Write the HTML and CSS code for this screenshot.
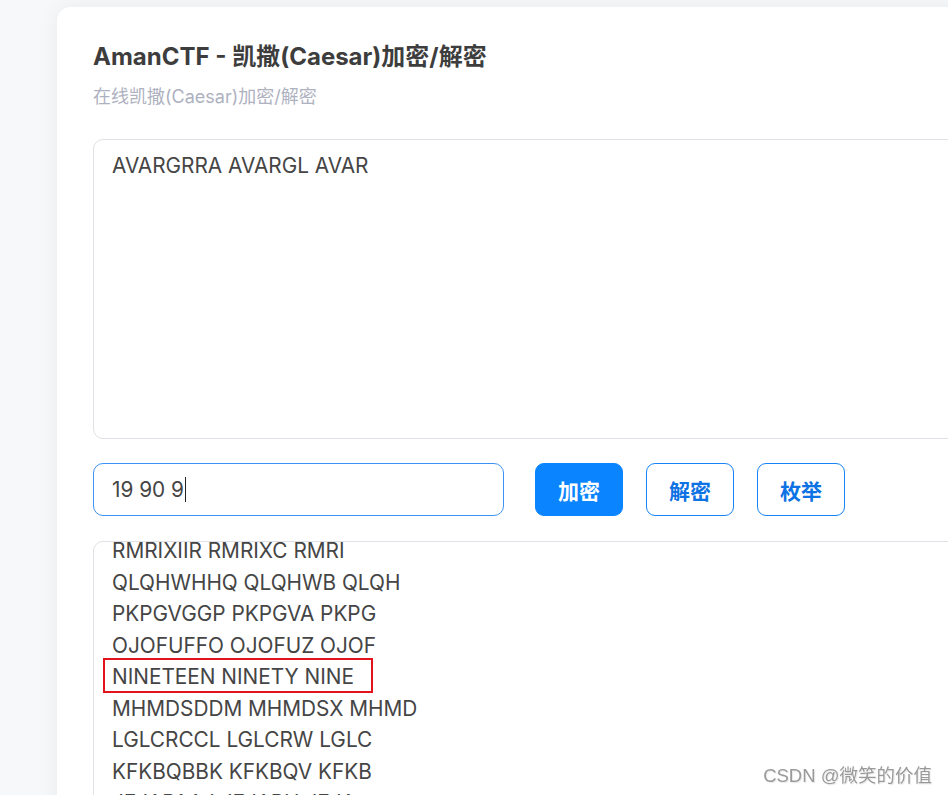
FILE: index.html
```html
<!DOCTYPE html>
<html lang="zh-CN">
<head>
<meta charset="utf-8">
<title>AmanCTF - 凯撒(Caesar)加密/解密</title>
<link rel="stylesheet" href="styles.css">
</head>
<body>
<main class="card">
  <h1 class="title">AmanCTF - 凯撒(Caesar)加密/解密</h1>
  <p class="subtitle">在线凯撒(Caesar)加密/解密</p>
  <div class="textbox">AVARGRRA AVARGL AVAR</div>
  <div class="controls">
    <div class="keyinput">19 90 9<span class="caret"></span></div>
    <button class="btn btn-primary">加密</button>
    <button class="btn">解密</button>
    <button class="btn">枚举</button>
  </div>
  <div class="output">
    <div class="lines">
      <div class="line">ZUZQFQQZ ZUZQFK ZUZQ</div>
      <div class="line">YTYPEPPY YTYPEJ YTYP</div>
      <div class="line">XSXODOOX XSXODI XSXO</div>
      <div class="line">WRWNCNNW WRWNCH WRWN</div>
      <div class="line">VQVMBMMV VQVMBG VQVM</div>
      <div class="line">UPULALLU UPULAF UPUL</div>
      <div class="line">TOTKZKKT TOTKZE TOTK</div>
      <div class="line">SNSJYJJS SNSJYD SNSJ</div>
      <div class="line">RMRIXIIR RMRIXC RMRI</div>
      <div class="line">QLQHWHHQ QLQHWB QLQH</div>
      <div class="line">PKPGVGGP PKPGVA PKPG</div>
      <div class="line">OJOFUFFO OJOFUZ OJOF</div>
      <div class="line hl">NINETEEN NINETY NINE</div>
      <div class="line">MHMDSDDM MHMDSX MHMD</div>
      <div class="line">LGLCRCCL LGLCRW LGLC</div>
      <div class="line">KFKBQBBK KFKBQV KFKB</div>
      <div class="line">JEJAPAAJ JEJAPU JEJA</div>
      <div class="line">IDIZOZZI IDIZOT IDIZ</div>
    </div>
  </div>
</main>
<div class="watermark">CSDN @微笑的价值</div>
</body>
</html>
```

FILE: styles.css
```css
html, body {
  margin: 0;
  padding: 0;
  height: 100%;
  overflow: hidden;
  background: #f7f8fa;
  font-family: Inter, "Noto Sans CJK SC", sans-serif;
  color: #454545;
}

.card {
  box-sizing: border-box;
  width: 1000px;
  height: 900px;
  margin: 7px 0 0 57px;
  padding: 33px 36px 0;
  background: #ffffff;
  border-radius: 14px;
  box-shadow: 0 0 22px rgba(0, 0, 0, 0.06);
}

.title {
  margin: 0;
  font-size: 24px;
  line-height: 33px;
  font-weight: 700;
  color: #3d3d3d;
}

.subtitle {
  margin: 12px 0 0;
  font-size: 18px;
  line-height: 24px;
  color: #aeb1c0;
}

.textbox {
  box-sizing: border-box;
  width: 900px;
  height: 300px;
  margin-top: 30px;
  padding: 10px 18px;
  border: 1px solid #dfe1e6;
  border-radius: 10px;
  font-size: 20.8px;
  line-height: 31.5px;
  color: #454545;
}

.controls {
  display: flex;
  align-items: center;
  margin-top: 24px;
  gap: 23px;
}

.keyinput {
  box-sizing: border-box;
  width: 411px;
  height: 53px;
  margin-right: 8px;
  padding: 0 18px;
  display: flex;
  align-items: center;
  border: 1px solid #3d93f5;
  border-radius: 10px;
  font-size: 20.8px;
  color: #454545;
}

.caret {
  display: inline-block;
  width: 0;
  height: 25px;
  margin-left: 1px;
  border-left: 1px solid #222;
}

.btn {
  box-sizing: border-box;
  width: 88px;
  height: 53px;
  padding: 0;
  border: 1px solid #1684f5;
  border-radius: 9px;
  background: #ffffff;
  color: #0d72e3;
  font-family: "Noto Sans CJK SC", Inter, sans-serif;
  font-size: 21px;
  font-weight: 700;
  cursor: pointer;
}

.btn-primary {
  background: #0a84ff;
  border-color: #0a84ff;
  color: #ffffff;
}

.output {
  box-sizing: border-box;
  width: 900px;
  height: 320px;
  margin-top: 25px;
  padding: 0 18px;
  border: 1px solid #dfe1e6;
  border-radius: 10px;
  overflow: hidden;
}

.lines {
  margin-top: -258.75px;
}

.line {
  font-size: 20.8px;
  line-height: 31.5px;
  color: #454545;
  white-space: nowrap;
}

.hl {
  position: relative;
}

.hl::after {
  content: "";
  position: absolute;
  box-sizing: border-box;
  left: -9px;
  top: -3px;
  width: 270px;
  height: 35px;
  border: 2px solid #e3131b;
}

.watermark {
  position: fixed;
  right: 16px;
  bottom: 8px;
  font-family: "Liberation Sans", "Noto Sans CJK SC", sans-serif;
  font-size: 18.5px;
  color: #9a9a9a;
  text-shadow: 0 0 2px rgba(255, 255, 255, 0.9), 1px 1px 1px rgba(0, 0, 0, 0.12);
}
```
